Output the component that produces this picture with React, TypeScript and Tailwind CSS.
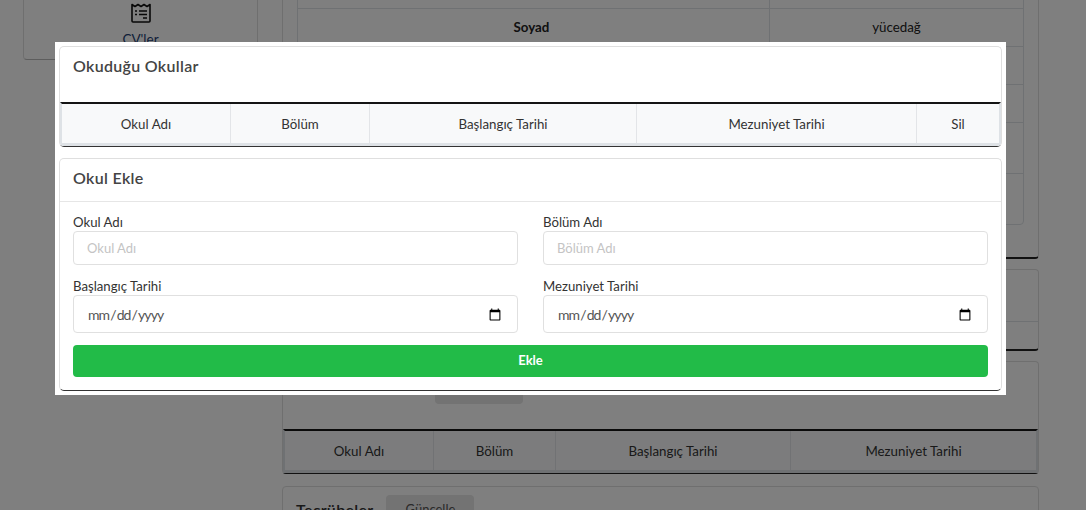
const lato = { fontFamily: '"Lato", "Liberation Sans", sans-serif' };

const HeaderTable = ({ cols }: { cols: { label: string; width: string }[] }) => (
  <div className="flex h-[44px] border-t-2 border-t-[#141414] border-b-[3px] border-b-[#dee2e6] border-x-2 border-x-[#dee2e6] bg-[#f8f9fa]">
    {cols.map((c, i) => (
      <div key={c.label} className={`${c.width} flex items-center justify-center pt-[2px] text-[13.3px] text-[#333] ${i > 0 ? 'border-l border-[#e3e5e8]' : ''}`}>
        {c.label}
      </div>
    ))}
  </div>
);

const Field = ({ label, type = 'text', className = '' }: { label: string; type?: string; className?: string }) => (
  <label className={`flex flex-col ${className}`}>
    <span className="translate-y-[1px] text-[13.2px] leading-[17px] text-[#333]">{label}</span>
    {type === 'date' ? (
      <input type="date" className="mt-[1px] h-[38px] w-full rounded-[4px] border border-[#e0e0e0] bg-white pl-[13px] pr-[13px] pt-[2px] text-sm tracking-[-0.9px] text-[#555] outline-none" style={lato} />
    ) : (
      <input placeholder={label} className="mt-[1px] h-[34px] w-full rounded-[4px] border border-[#e0e0e0] bg-white px-[13px] text-[13px] outline-none placeholder:text-[#c4c4c4]" style={lato} />
    )}
  </label>
);

const CvIcon = () => (
  <svg width="22" height="22" viewBox="0 0 22 22" fill="none" stroke="#111" strokeWidth="1.6" className="mx-auto">
    <path d="M2 2.5l3 2 3-2 3 2 3-2 3 2 3-2V19a1 1 0 0 1-1 1H3a1 1 0 0 1-1-1z" strokeLinejoin="round" />
    <path d="M5 9h2M9 9h8M5 12.5h2M9 12.5h8M13 16h4" />
  </svg>
);

const BgRow = ({ left, right, h }: { left?: string; right?: string; h: string }) => (
  <div className={`flex ${h} border-b border-[#dee2e6] text-[13.3px] text-[#222]`}>
    <div className="flex w-[471px] items-center justify-center pr-[4px] font-bold">{left}</div>
    <div className="flex flex-1 items-center justify-center border-l border-[#dee2e6]">{right}</div>
  </div>
);

export default function App() {
  return (
    <div className="relative h-[510px] w-[1086px] overflow-hidden bg-white" style={lato}>
      {/* page behind the modal */}
      <div className="flex items-start gap-[24px] pl-[23px]">
        <div className="-mt-[20px] h-[80px] w-[235px] rounded-[4px] border border-[#dfdfdf] border-b-[#bbb] pt-[21px] text-center">
          <CvIcon />
          <div className="mt-[5px] text-[13.5px] leading-[20px] text-[#1d3f72]">CV'ler</div>
        </div>
        <div className="flex w-[757px] flex-col gap-[10px]">
          <div className="-mt-[20px] h-[279px] rounded-[4px] border border-[#dfdfdf] border-b-2 border-b-[#222] px-[14px]">
            <div className="h-[244px] rounded-[4px] border border-[#dee2e6]">
              <BgRow h="h-[27px]" />
              <BgRow h="h-[38px]" left="Soyad" right="yücedağ" />
              <BgRow h="h-[38px]" />
              <BgRow h="h-[38px]" />
              <BgRow h="h-[51px]" />
            </div>
          </div>
          <div className="flex h-[82px] flex-col justify-end rounded-[4px] border border-[#dfdfdf] border-b-2 border-b-[#222]">
            <div className="h-[28px] border-t border-[#dee2e6]" />
          </div>
          <div className="flex h-[113px] flex-col rounded-[4px] border border-[#dfdfdf] border-b-[#222]">
            <div className="flex-1 pl-[152px] pt-[20px]">
              <div className="h-[22px] w-[88px] rounded-[4px] bg-[#e6e6e6]" />
            </div>
            <HeaderTable
              cols={[
                { label: 'Okul Adı', width: 'w-[148px]' },
                { label: 'Bölüm', width: 'w-[122px]' },
                { label: 'Başlangıç Tarihi', width: 'w-[235px]' },
                { label: 'Mezuniyet Tarihi', width: 'flex-1' },
              ]}
            />
          </div>
          <div className="mt-[2px] flex h-[60px] items-start gap-[13px] rounded-[4px] border border-[#dfdfdf] px-[13px] pt-[8px]">
            <span className="text-base font-semibold leading-[30px] tracking-[0.3px] text-[#333]">Tecrübeler</span>
            <span className="flex h-[30px] w-[88px] items-center justify-center rounded-[4px] bg-[#e6e6e6] text-[13px] text-[#555]">Güncelle</span>
          </div>
        </div>
      </div>

      {/* dim layer */}
      <div className="absolute inset-0 bg-black/50" />

      {/* modal */}
      <div className="absolute left-[55px] top-[42px] flex h-[353px] w-[951px] flex-col gap-[11px] bg-white p-[4px]">
        <div className="flex h-[101px] flex-col overflow-hidden rounded-[5px] border border-[#dfdfdf] border-b-[#333]">
          <div className="flex-1 px-[13px] pt-[9px] text-base font-semibold leading-[20px] tracking-[0.3px] text-[#444]">Okuduğu Okullar</div>
          <HeaderTable
            cols={[
              { label: 'Okul Adı', width: 'w-[168px]' },
              { label: 'Bölüm', width: 'w-[139px]' },
              { label: 'Başlangıç Tarihi', width: 'w-[267px]' },
              { label: 'Mezuniyet Tarihi', width: 'w-[280px]' },
              { label: 'Sil', width: 'flex-1' },
            ]}
          />
        </div>
        <div className="flex flex-1 flex-col rounded-[5px] border border-[#dfdfdf] border-b-[#333]">
          <div className="flex h-[43px] items-center border-b border-[#e6e6e6] px-[13px] pb-[4px] text-base font-semibold tracking-[0.3px] text-[#444]">Okul Ekle</div>
          <div className="flex flex-col px-[13px] pt-[11px]">
            <div className="grid grid-cols-2 gap-x-[25px] gap-y-[12px]">
              <Field label="Okul Adı" />
              <Field label="Bölüm Adı" />
              <Field label="Başlangıç Tarihi" type="date" />
              <Field label="Mezuniyet Tarihi" type="date" />
            </div>
            <button className="mt-[12px] h-[32px] rounded-[4px] bg-[#22bb48] text-[13px] font-bold text-white">Ekle</button>
          </div>
        </div>
      </div>
    </div>
  );
}
